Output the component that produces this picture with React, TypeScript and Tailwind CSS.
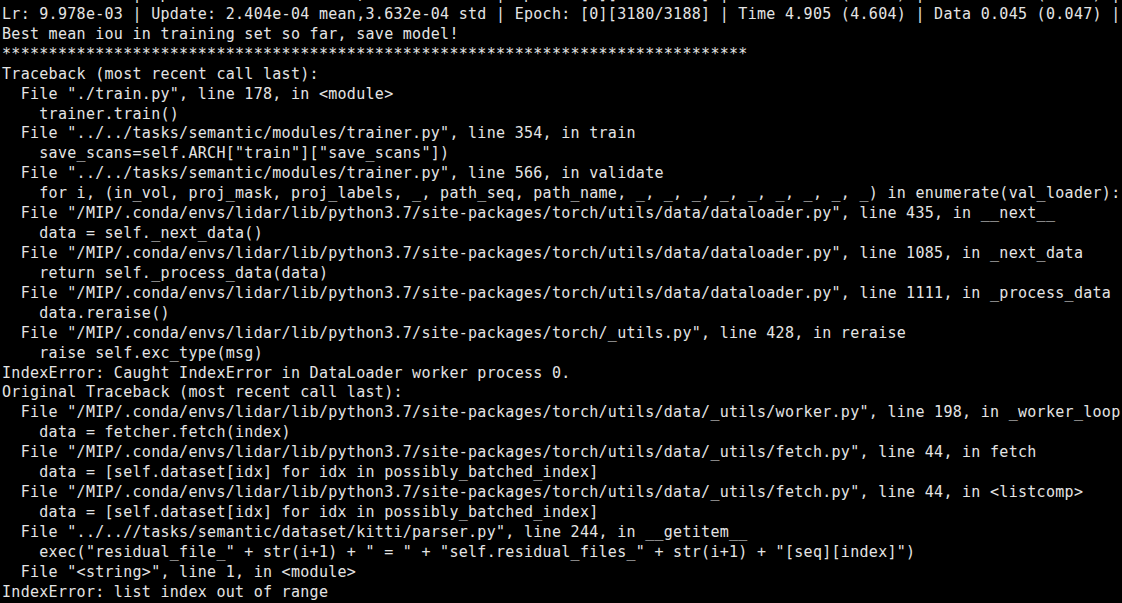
const lines = [
  "Lr: 9.978e-03 | Update: 2.511e-04 mean,3.807e-04 std | Epoch: [0][3170/3188] | Time 4.613 (4.603) | Data 0.046 (0.047) |",
  "Lr: 9.978e-03 | Update: 2.404e-04 mean,3.632e-04 std | Epoch: [0][3180/3188] | Time 4.905 (4.604) | Data 0.045 (0.047) |",
  "Best mean iou in training set so far, save model!",
  "*".repeat(80),
  "Traceback (most recent call last):",
  '  File "./train.py", line 178, in <module>',
  "    trainer.train()",
  '  File "../../tasks/semantic/modules/trainer.py", line 354, in train',
  '    save_scans=self.ARCH["train"]["save_scans"])',
  '  File "../../tasks/semantic/modules/trainer.py", line 566, in validate',
  "    for i, (in_vol, proj_mask, proj_labels, _, path_seq, path_name, _, _, _, _, _, _, _, _, _) in enumerate(val_loader):",
  '  File "/MIP/.conda/envs/lidar/lib/python3.7/site-packages/torch/utils/data/dataloader.py", line 435, in __next__',
  "    data = self._next_data()",
  '  File "/MIP/.conda/envs/lidar/lib/python3.7/site-packages/torch/utils/data/dataloader.py", line 1085, in _next_data',
  "    return self._process_data(data)",
  '  File "/MIP/.conda/envs/lidar/lib/python3.7/site-packages/torch/utils/data/dataloader.py", line 1111, in _process_data',
  "    data.reraise()",
  '  File "/MIP/.conda/envs/lidar/lib/python3.7/site-packages/torch/_utils.py", line 428, in reraise',
  "    raise self.exc_type(msg)",
  "IndexError: Caught IndexError in DataLoader worker process 0.",
  "Original Traceback (most recent call last):",
  '  File "/MIP/.conda/envs/lidar/lib/python3.7/site-packages/torch/utils/data/_utils/worker.py", line 198, in _worker_loop',
  "    data = fetcher.fetch(index)",
  '  File "/MIP/.conda/envs/lidar/lib/python3.7/site-packages/torch/utils/data/_utils/fetch.py", line 44, in fetch',
  "    data = [self.dataset[idx] for idx in possibly_batched_index]",
  '  File "/MIP/.conda/envs/lidar/lib/python3.7/site-packages/torch/utils/data/_utils/fetch.py", line 44, in <listcomp>',
  "    data = [self.dataset[idx] for idx in possibly_batched_index]",
  '  File "../..//tasks/semantic/dataset/kitti/parser.py", line 244, in __getitem__',
  '    exec("residual_file_" + str(i+1) + " = " + "self.residual_files_" + str(i+1) + "[seq][index]")',
  '  File "<string>", line 1, in <module>',
  "IndexError: list index out of range",
];

export default function App() {
  return (
    <div className="w-[1122px] h-[603px] bg-black overflow-hidden">
      <div className="-mt-[15px] pl-[2px] text-[15px] leading-[19.92px] tracking-[0.29px] text-[#e4e4e4] font-['DejaVu_Sans_Mono',monospace] whitespace-pre">
        {lines.map((l, i) => (
          <div key={i}>{l}</div>
        ))}
      </div>
    </div>
  );
}
